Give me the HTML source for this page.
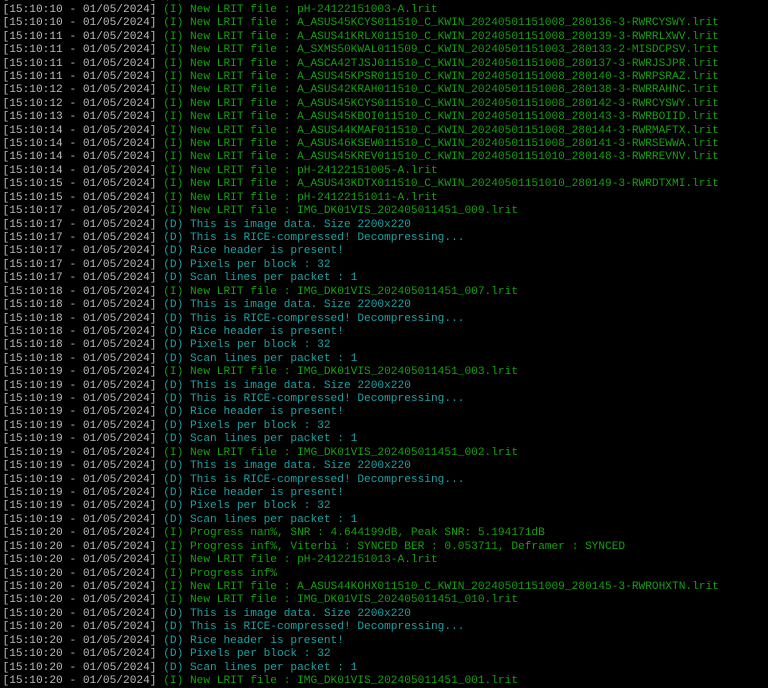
<!DOCTYPE html>
<html><head><meta charset="utf-8"><style>
html,body{margin:0;padding:0;background:#000;width:768px;height:684px;overflow:hidden}
#t{position:absolute;left:2.5px;top:-9.6px;font-family:"Liberation Mono",monospace;font-size:11.17px;line-height:13.42px;white-space:pre;color:#bcbcbc}
.i{color:#13a10e}.d{color:#1aa3a3}
</style></head><body><div id="t"><div>[15:10:09 - 01/05/2024] <span class="i">(I) New LRIT file : A_ASUS44KOHX011510_C_KWIN_20240501151008_280135-3-RWROHXTN.lrit</span></div><div>[15:10:10 - 01/05/2024] <span class="i">(I) New LRIT file : pH-24122151003-A.lrit</span></div><div>[15:10:10 - 01/05/2024] <span class="i">(I) New LRIT file : A_ASUS45KCYS011510_C_KWIN_20240501151008_280136-3-RWRCYSWY.lrit</span></div><div>[15:10:11 - 01/05/2024] <span class="i">(I) New LRIT file : A_ASUS41KRLX011510_C_KWIN_20240501151008_280139-3-RWRRLXWV.lrit</span></div><div>[15:10:11 - 01/05/2024] <span class="i">(I) New LRIT file : A_SXMS50KWAL011509_C_KWIN_20240501151003_280133-2-MISDCPSV.lrit</span></div><div>[15:10:11 - 01/05/2024] <span class="i">(I) New LRIT file : A_ASCA42TJSJ011510_C_KWIN_20240501151008_280137-3-RWRJSJPR.lrit</span></div><div>[15:10:11 - 01/05/2024] <span class="i">(I) New LRIT file : A_ASUS45KPSR011510_C_KWIN_20240501151008_280140-3-RWRPSRAZ.lrit</span></div><div>[15:10:12 - 01/05/2024] <span class="i">(I) New LRIT file : A_ASUS42KRAH011510_C_KWIN_20240501151008_280138-3-RWRRAHNC.lrit</span></div><div>[15:10:12 - 01/05/2024] <span class="i">(I) New LRIT file : A_ASUS45KCYS011510_C_KWIN_20240501151008_280142-3-RWRCYSWY.lrit</span></div><div>[15:10:13 - 01/05/2024] <span class="i">(I) New LRIT file : A_ASUS45KBOI011510_C_KWIN_20240501151008_280143-3-RWRBOIID.lrit</span></div><div>[15:10:14 - 01/05/2024] <span class="i">(I) New LRIT file : A_ASUS44KMAF011510_C_KWIN_20240501151008_280144-3-RWRMAFTX.lrit</span></div><div>[15:10:14 - 01/05/2024] <span class="i">(I) New LRIT file : A_ASUS46KSEW011510_C_KWIN_20240501151008_280141-3-RWRSEWWA.lrit</span></div><div>[15:10:14 - 01/05/2024] <span class="i">(I) New LRIT file : A_ASUS45KREV011510_C_KWIN_20240501151010_280148-3-RWRREVNV.lrit</span></div><div>[15:10:14 - 01/05/2024] <span class="i">(I) New LRIT file : pH-24122151005-A.lrit</span></div><div>[15:10:15 - 01/05/2024] <span class="i">(I) New LRIT file : A_ASUS43KDTX011510_C_KWIN_20240501151010_280149-3-RWRDTXMI.lrit</span></div><div>[15:10:15 - 01/05/2024] <span class="i">(I) New LRIT file : pH-24122151011-A.lrit</span></div><div>[15:10:17 - 01/05/2024] <span class="i">(I) New LRIT file : IMG_DK01VIS_202405011451_009.lrit</span></div><div>[15:10:17 - 01/05/2024] <span class="d">(D) This is image data. Size 2200x220</span></div><div>[15:10:17 - 01/05/2024] <span class="d">(D) This is RICE-compressed! Decompressing...</span></div><div>[15:10:17 - 01/05/2024] <span class="d">(D) Rice header is present!</span></div><div>[15:10:17 - 01/05/2024] <span class="d">(D) Pixels per block : 32</span></div><div>[15:10:17 - 01/05/2024] <span class="d">(D) Scan lines per packet : 1</span></div><div>[15:10:18 - 01/05/2024] <span class="i">(I) New LRIT file : IMG_DK01VIS_202405011451_007.lrit</span></div><div>[15:10:18 - 01/05/2024] <span class="d">(D) This is image data. Size 2200x220</span></div><div>[15:10:18 - 01/05/2024] <span class="d">(D) This is RICE-compressed! Decompressing...</span></div><div>[15:10:18 - 01/05/2024] <span class="d">(D) Rice header is present!</span></div><div>[15:10:18 - 01/05/2024] <span class="d">(D) Pixels per block : 32</span></div><div>[15:10:18 - 01/05/2024] <span class="d">(D) Scan lines per packet : 1</span></div><div>[15:10:19 - 01/05/2024] <span class="i">(I) New LRIT file : IMG_DK01VIS_202405011451_003.lrit</span></div><div>[15:10:19 - 01/05/2024] <span class="d">(D) This is image data. Size 2200x220</span></div><div>[15:10:19 - 01/05/2024] <span class="d">(D) This is RICE-compressed! Decompressing...</span></div><div>[15:10:19 - 01/05/2024] <span class="d">(D) Rice header is present!</span></div><div>[15:10:19 - 01/05/2024] <span class="d">(D) Pixels per block : 32</span></div><div>[15:10:19 - 01/05/2024] <span class="d">(D) Scan lines per packet : 1</span></div><div>[15:10:19 - 01/05/2024] <span class="i">(I) New LRIT file : IMG_DK01VIS_202405011451_002.lrit</span></div><div>[15:10:19 - 01/05/2024] <span class="d">(D) This is image data. Size 2200x220</span></div><div>[15:10:19 - 01/05/2024] <span class="d">(D) This is RICE-compressed! Decompressing...</span></div><div>[15:10:19 - 01/05/2024] <span class="d">(D) Rice header is present!</span></div><div>[15:10:19 - 01/05/2024] <span class="d">(D) Pixels per block : 32</span></div><div>[15:10:19 - 01/05/2024] <span class="d">(D) Scan lines per packet : 1</span></div><div>[15:10:20 - 01/05/2024] <span class="i">(I) Progress nan%, SNR : 4.644199dB, Peak SNR: 5.194171dB</span></div><div>[15:10:20 - 01/05/2024] <span class="i">(I) Progress inf%, Viterbi : SYNCED BER : 0.053711, Deframer : SYNCED</span></div><div>[15:10:20 - 01/05/2024] <span class="i">(I) New LRIT file : pH-24122151013-A.lrit</span></div><div>[15:10:20 - 01/05/2024] <span class="i">(I) Progress inf%</span></div><div>[15:10:20 - 01/05/2024] <span class="i">(I) New LRIT file : A_ASUS44KOHX011510_C_KWIN_20240501151009_280145-3-RWROHXTN.lrit</span></div><div>[15:10:20 - 01/05/2024] <span class="i">(I) New LRIT file : IMG_DK01VIS_202405011451_010.lrit</span></div><div>[15:10:20 - 01/05/2024] <span class="d">(D) This is image data. Size 2200x220</span></div><div>[15:10:20 - 01/05/2024] <span class="d">(D) This is RICE-compressed! Decompressing...</span></div><div>[15:10:20 - 01/05/2024] <span class="d">(D) Rice header is present!</span></div><div>[15:10:20 - 01/05/2024] <span class="d">(D) Pixels per block : 32</span></div><div>[15:10:20 - 01/05/2024] <span class="d">(D) Scan lines per packet : 1</span></div><div>[15:10:20 - 01/05/2024] <span class="i">(I) New LRIT file : IMG_DK01VIS_202405011451_001.lrit</span></div></div></body></html>
